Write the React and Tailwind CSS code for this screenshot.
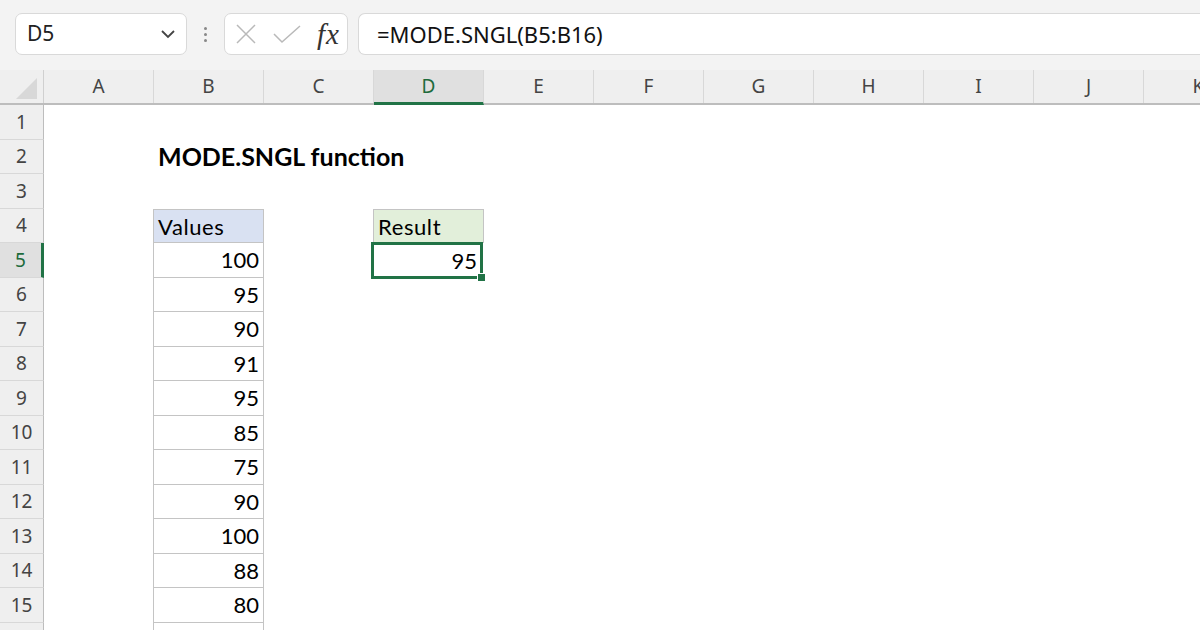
import React from 'react';

const cols = ['A', 'B', 'C', 'D', 'E', 'F', 'G', 'H', 'I', 'J', 'K'];
const values = [100, 95, 90, 91, 95, 85, 75, 90, 100, 88, 80];

const headFont = { fontFamily: '"Noto Sans", "Open Sans", sans-serif' };
const cellFont = { fontFamily: 'Lato, "Noto Sans", sans-serif' };

function Toolbar() {
  return (
    <div className="h-[70px] bg-[#f3f3f3] flex items-start pt-[13px] pl-[15px] gap-0" style={headFont}>
      <div className="w-[172px] h-[42px] bg-white border border-[#d9d9d9] rounded-[7px] flex items-center justify-between pl-[11px] pr-[10px]">
        <span className="text-[21px] text-[#222]">D5</span>
        <svg width="16" height="10" viewBox="0 0 16 10" fill="none">
          <path d="M2 2 L8 8 L14 2" stroke="#444" strokeWidth="1.8" />
        </svg>
      </div>
      <div className="w-[37px] h-[42px] flex flex-col items-center justify-center gap-[3px]">
        <span className="w-[3px] h-[3px] bg-[#888] rounded-full"></span>
        <span className="w-[3px] h-[3px] bg-[#888] rounded-full"></span>
        <span className="w-[3px] h-[3px] bg-[#888] rounded-full"></span>
      </div>
      <div className="w-[124px] h-[42px] bg-white border border-[#d9d9d9] rounded-[7px] flex items-center pl-[10px] pr-[7px] justify-between">
        <svg width="22" height="22" viewBox="0 0 22 22" fill="none">
          <path d="M2 2 L20 20 M20 2 L2 20" stroke="#b9b9b9" strokeWidth="1.5" />
        </svg>
        <svg width="28" height="20" viewBox="0 0 28 20" fill="none">
          <path d="M1 10 L9 18 L27 2" stroke="#b9b9b9" strokeWidth="1.5" />
        </svg>
        <span className="text-[29px] italic text-[#333] leading-none tracking-[1px]" style={{ fontFamily: '"Liberation Serif", serif' }}>fx</span>
      </div>
      <div className="ml-[10px] flex-1 h-[42px] bg-white border border-[#d9d9d9] border-r-0 rounded-l-[7px] flex items-center pl-[18px]">
        <span className="text-[22px] text-[#111]">=MODE.SNGL(B5:B16)</span>
      </div>
    </div>
  );
}

function ColHeader() {
  return (
    <div className="flex h-[35px] bg-[#efefef] border-b-2 border-[#bdbdbd]" style={headFont}>
      <div className="w-[44px] shrink-0 relative border-r border-[#d0d0d0]">
        <div
          className="absolute right-[6px] bottom-[4px] w-[21px] h-[21px] bg-[#d8d8d8]"
          style={{ clipPath: 'polygon(100% 0, 100% 100%, 0 100%)' }}
        ></div>
      </div>
      {cols.map((c) => (
        <div
          key={c}
          className={
            'w-[110px] shrink-0 flex items-center justify-center text-[19px] border-r border-[#d8d8d8] ' +
            (c === 'D'
              ? 'bg-[#e0e0e0] text-[#1e6b3c] border-b-[3px] border-b-[#217346] -mb-[2px]'
              : 'text-[#444]')
          }
        >
          {c}
        </div>
      ))}
    </div>
  );
}

function Row({ n, children }) {
  const sel = n === 5;
  return (
    <div className="flex h-[34.5px]">
      <div
        className={
          'w-[44px] shrink-0 flex items-center justify-center text-[19px] border-b border-[#d8d8d8] ' +
          (sel
            ? 'bg-[#e0e0e0] text-[#1e6b3c] border-r-[3px] border-r-[#217346]'
            : 'bg-[#efefef] text-[#444] border-r border-r-[#bdbdbd]')
        }
        style={headFont}
      >
        {n}
      </div>
      <div className="flex-1 bg-white relative" style={cellFont}>
        {children}
      </div>
    </div>
  );
}

export default function App() {
  const rows = [];
  for (let n = 1; n <= 16; n++) {
    let content = null;
    if (n === 2) {
      content = (
        <div className="absolute left-[110px] top-0 h-full flex items-center pl-[4px] text-[25px] font-bold text-black whitespace-nowrap">
          MODE.SNGL function
        </div>
      );
    }
    if (n >= 4) {
      const isHead = n === 4;
      content = (
        <>
          <div
            className={
              'absolute left-[109px] w-[111px] h-[35.5px] border border-[#c4c4c4] flex items-center text-[22px] text-black ' +
              (isHead ? 'bg-[#d9e1f2] pl-[4px] tracking-[0.6px]' : 'bg-white justify-end pr-[4px]')
            }
            style={{ top: isHead ? 0 : -1 }}
          >
            {isHead ? 'Values' : values[n - 5]}
          </div>
          {n === 4 && (
            <div className="absolute left-[329px] top-0 w-[111px] h-[35.5px] border border-[#c4c4c4] bg-[#e2efda] flex items-center pl-[4px] text-[22px] text-black tracking-[0.6px]">
              Result
            </div>
          )}
          {n === 5 && (
            <div className="absolute z-10 left-[327px] -top-[1px] w-[112px] h-[37px] border-[3px] border-[#217346] bg-white flex items-center justify-end pr-[3px] text-[22px] text-black">
              95
              <span className="absolute -right-[6px] -bottom-[6px] w-[9px] h-[9px] bg-[#217346] border border-white"></span>
            </div>
          )}
        </>
      );
    }
    rows.push(
      <Row key={n} n={n}>
        {content}
      </Row>
    );
  }
  return (
    <div className="w-[1200px] h-[630px] overflow-hidden bg-white">
      <Toolbar />
      <ColHeader />
      {rows}
    </div>
  );
}
